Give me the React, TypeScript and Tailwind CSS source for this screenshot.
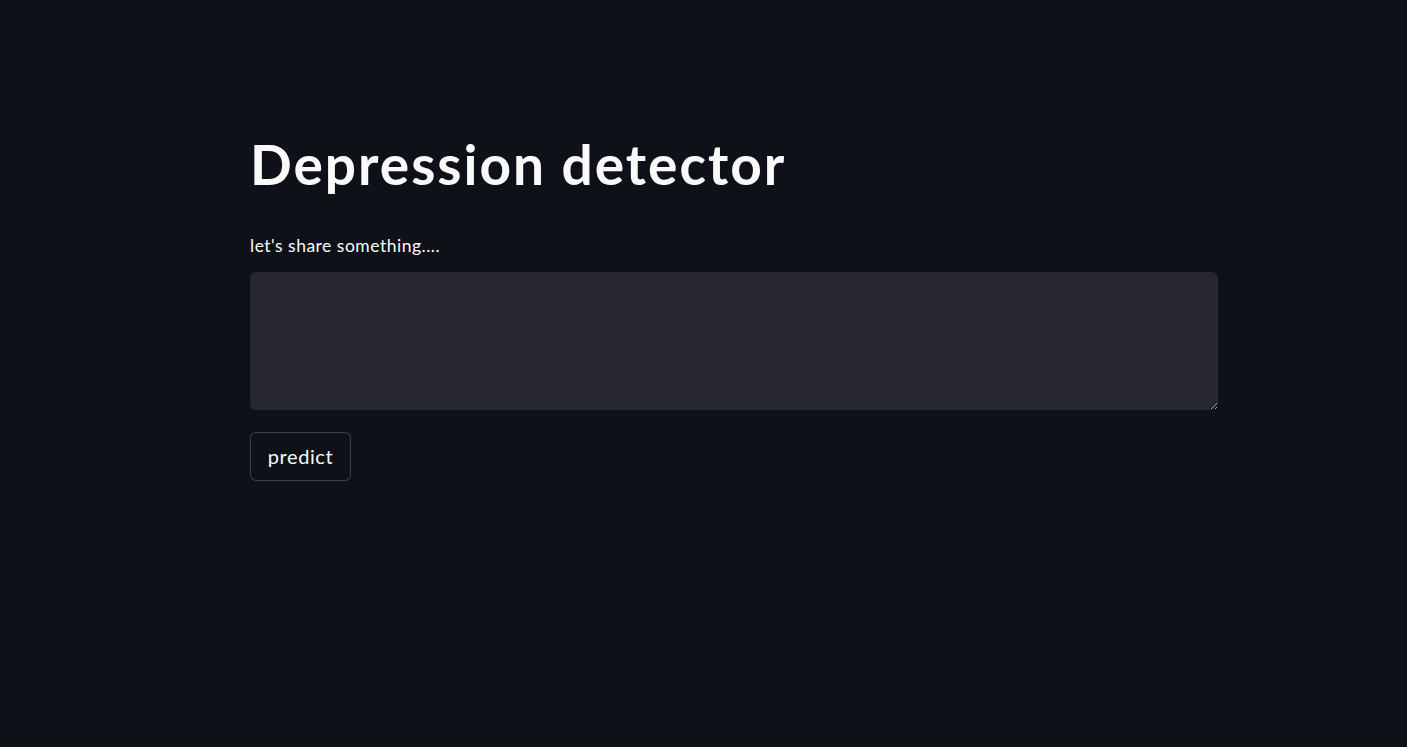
export default function App() {
  return (
    <div className="min-h-screen w-full bg-[#0e1117] text-[#fafafa]" style={{ fontFamily: '"Lato", "Noto Sans", sans-serif' }}>
      <div className="ml-[250px] w-[968px] pt-[128px] flex flex-col">
        <h1 className="text-[55px] font-bold leading-[72px] tracking-[2px]">Depression detector</h1>
        <label className="mt-[35px] text-[17.5px] leading-[22px] tracking-[0.5px]">let's share something....</label>
        <textarea className="mt-[15px] h-[138px] w-full resize-y rounded-[6px] bg-[#262730] outline-none border-none px-4 py-3 text-[17.5px]" />
        <div className="mt-[22px]">
          <button className="h-[49px] w-[101px] rounded-[6px] border border-[rgba(250,250,250,0.2)] bg-[#0e1117] text-[20px] leading-none tracking-[0.6px] pb-[2px]">predict</button>
        </div>
      </div>
    </div>
  );
}
